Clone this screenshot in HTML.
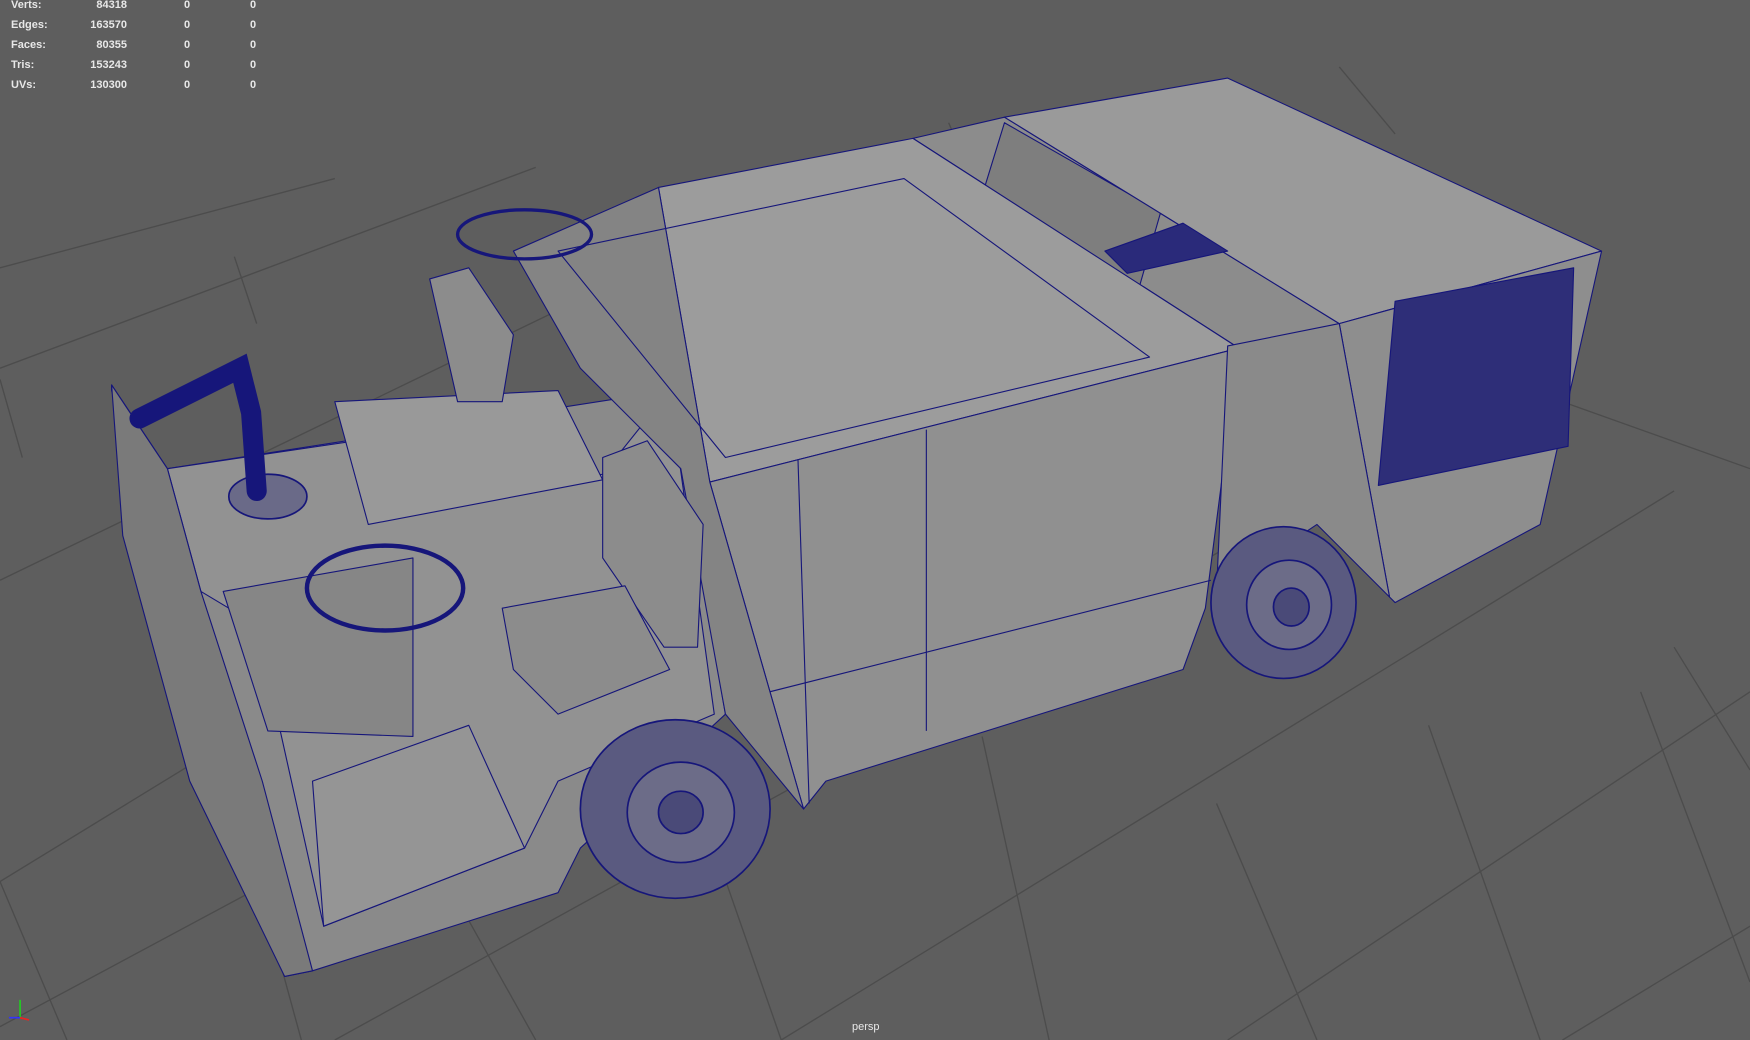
<!DOCTYPE html>
<html><head><meta charset="utf-8"><style>
html,body{margin:0;padding:0;background:#5e5e5e;width:1750px;height:1040px;overflow:hidden}
svg{position:absolute;left:0;top:0}
.hud{position:absolute;font-family:"Liberation Sans",sans-serif;font-weight:bold;font-size:11px;color:#e8e8e8}
</style></head><body>
<svg width="1750" height="1040" viewBox="0 0 1568 932" preserveAspectRatio="none">
<g stroke="#4c4c4c" stroke-width="1.2" fill="none">
<path d="M0 330 L480 150 M0 520 L620 220 M0 790 L800 300 M0 920 L1100 330 M300 932 L1300 380 M700 932 L1500 440 M1100 932 L1568 620 M1400 932 L1568 830"/>
<path d="M0 240 L300 160 M60 932 L0 790 M270 932 L130 420 M480 932 L350 700 M700 932 L640 760 M940 932 L880 660 M1180 932 L1090 720 M1380 932 L1280 650 M1568 880 L1470 620 M1568 690 L1500 580 M20 410 L0 340 M230 290 L210 230 M880 180 L850 110 M1250 120 L1200 60 M1400 360 L1568 420"/>
</g>
<g stroke="#16167a" stroke-width="1" stroke-linejoin="round">
<!-- front cab -->
<polygon points="100,345 150,420 600,350 650,640 520,760 500,800 280,870 255,875 100,350" fill="#8a8a8a"/>
<polygon points="150,420 420,380 440,440 540,425 600,350 640,640 500,700 470,760 290,830 230,560 180,530" fill="#929292"/>
<polygon points="100,345 150,420 180,530 235,700 280,870 255,875 170,700 110,480" fill="#7a7a7a"/>
<polygon points="200,530 370,500 370,660 240,655" fill="#868686"/>
<polygon points="280,700 420,650 470,760 290,830" fill="#959595"/>
<polygon points="300,360 500,350 540,430 330,470" fill="#999"/>
<!-- connector between box and rear -->
<polygon points="818,124 900,105 1200,290 1110,312" fill="#8c8c8c"/>
<polygon points="880,175 900,110 1040,190 1020,260 930,200" fill="#7e7e7e"/>
<!-- main box -->
<polygon points="590,168 818,124 1110,312 636,432" fill="#9c9c9c"/>
<polygon points="636,432 1110,312 1080,545 1060,600 740,700 720,725" fill="#909090"/>
<line x1="830" y1="385" x2="830" y2="655" />
<line x1="715" y1="412" x2="725" y2="720"/>
<line x1="650" y1="630" x2="1085" y2="520"/>
<polygon points="460,225 590,168 636,432 720,725 650,640 610,420 520,330" fill="#848484"/>
<polygon points="500,225 810,160 1030,320 650,410" fill="none"/>
<!-- rear unit -->
<polygon points="900,105 1100,70 1435,225 1200,290" fill="#9a9a9a"/>
<polygon points="1200,290 1435,225 1380,470 1250,540 1245,535" fill="#8e8e8e"/>
<polygon points="1250,270 1410,240 1405,400 1235,435" fill="#2e2e78"/>
<polygon points="1100,310 1200,290 1245,535 1180,470 1090,530" fill="#8a8a8a"/>
<polygon points="990,225 1060,200 1100,225 1010,245" fill="#2a2a7a"/>
<!-- seats -->
<polygon points="540,410 580,395 630,470 625,580 595,580 540,500" fill="#8c8c8c"/>
<polygon points="450,545 560,525 600,600 500,640 460,600" fill="#8c8c8c"/>
<polygon points="385,250 420,240 460,300 450,360 410,360" fill="#8c8c8c"/>
</g>
<g stroke="#16167a" fill="#5a5a80" stroke-width="1.5">
<ellipse cx="605" cy="725" rx="85" ry="80"/>
<ellipse cx="610" cy="728" rx="48" ry="45" fill="#6c6c88"/>
<ellipse cx="610" cy="728" rx="20" ry="19" fill="#4a4a78"/>
<ellipse cx="1150" cy="540" rx="65" ry="68"/>
<ellipse cx="1155" cy="542" rx="38" ry="40" fill="#6c6c88"/>
<ellipse cx="1157" cy="544" rx="16" ry="17" fill="#4a4a78"/>
<ellipse cx="345" cy="527" rx="70" ry="38" fill="none" stroke-width="4"/>
<ellipse cx="240" cy="445" rx="35" ry="20" fill="#6a6a88"/>
<ellipse cx="470" cy="210" rx="60" ry="22" fill="none" stroke-width="3"/>
</g>
<g stroke="#16167a" stroke-width="18" fill="none" stroke-linecap="round">
<path d="M230 440 L225 370 L215 330 L185 345 L125 375"/>
</g>
<g>
<line x1="18" y1="912" x2="18" y2="896" stroke="#2c2" stroke-width="1.5"/>
<line x1="18" y1="912" x2="8" y2="912" stroke="#33f" stroke-width="1.5"/>
<line x1="18" y1="912" x2="26" y2="914" stroke="#e22" stroke-width="1.5"/>
</g>
</svg>
<div class="hud" style="left:11px;top:-5px;line-height:20px">Verts:<br>Edges:<br>Faces:<br>Tris:<br>UVs:</div>
<div class="hud" style="left:70px;width:57px;text-align:right;top:-5px;line-height:20px">84318<br>163570<br>80355<br>153243<br>130300</div>
<div class="hud" style="left:184px;top:-5px;line-height:20px">0<br>0<br>0<br>0<br>0</div>
<div class="hud" style="left:250px;top:-5px;line-height:20px">0<br>0<br>0<br>0<br>0</div>
<div class="hud" style="left:852px;top:1021px;font-weight:normal">persp</div>
</body></html>
